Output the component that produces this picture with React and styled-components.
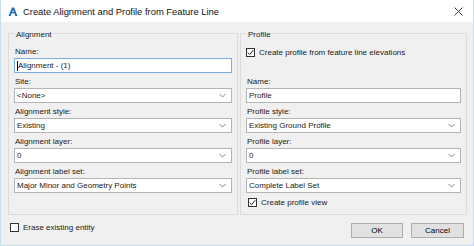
import React from "react";
import styled, { createGlobalStyle } from "styled-components";

const GlobalStyle = createGlobalStyle`
  html, body {
    margin: 0;
    padding: 0;
    background: #ffffff;
  }
  body {
    font-family: "Liberation Sans", Arial, sans-serif;
    color: #1a1a1a;
  }
`;

const Window = styled.div`
  width: 474px;
  height: 246px;
  box-sizing: border-box;
  display: flex;
  flex-direction: column;
  border: 1px solid #c2e0f2;
  border-top: none;
  background: #f0f0f0;
  overflow: hidden;
`;

const TitleBar = styled.div`
  height: 22px;
  flex: none;
  background: #ffffff;
  display: flex;
  align-items: center;
  padding: 0 10px 0 7px;
`;

const Title = styled.span`
  font-size: 9.4px;
  margin-left: 5px;
  flex: 1;
  color: #111;
`;

const Body = styled.div`
  flex: 1;
  display: flex;
  flex-direction: column;
  padding: 4px 7px 0 7px;
`;

const Columns = styled.div`
  display: grid;
  grid-template-columns: 230px 227px;
  gap: 2px;
`;

const Group = styled.fieldset`
  margin: 0;
  height: 189px;
  box-sizing: border-box;
  border: 1px solid #dcdcdc;
  padding: 0 5px;
  min-width: 0;
`;

const Legend = styled.legend`
  font-size: 8px;
  padding: 4px 1px 0 1px;
  margin-left: 1px;
  line-height: 10px;
`;

const Label = styled.div`
  font-size: 8px;
  line-height: 12px;
  height: 12px;
  padding-left: 1px;
  margin-top: ${(p) => p.$top || 0}px;
`;

const Field = styled.div`
  height: 15px;
  box-sizing: border-box;
  background: #ffffff;
  border: 1px solid ${(p) => (p.$focused ? "#7aaee0" : "#b4b4b4")};
  display: flex;
  align-items: center;
  padding: 0 5px 0 2px;
  font-size: 8px;
  margin-bottom: 3px;
`;

const FieldText = styled.span`
  flex: 1;
  white-space: nowrap;
  overflow: hidden;
`;

const Caret = styled.span`
  display: inline-block;
  width: 1px;
  height: 10px;
  background: #000;
`;

const CheckRow = styled.label`
  display: flex;
  align-items: center;
  gap: 4px;
  font-size: 8px;
  height: 12px;
  margin-top: ${(p) => p.$top || 0}px;
  margin-bottom: ${(p) => p.$bottom || 0}px;
  padding-left: ${(p) => p.$left || 0}px;
`;

const Box = styled.span`
  width: 9px;
  height: 9px;
  box-sizing: border-box;
  border: 1px solid #333;
  background: #fff;
  display: flex;
  align-items: center;
  justify-content: center;
`;

const Footer = styled.div`
  display: flex;
  align-items: flex-start;
  justify-content: space-between;
  padding-left: 2px;
`;

const Buttons = styled.div`
  display: flex;
  gap: 8px;
  margin-top: 8px;
  padding-right: 2px;
`;

const Button = styled.button`
  width: ${(p) => p.$w || 53}px;
  height: 15px;
  box-sizing: border-box;
  background: #e1e1e1;
  border: 1px solid #adadad;
  font-family: "Liberation Sans", Arial, sans-serif;
  font-size: 8px;
  color: #000;
  padding: 0;
`;

const Chevron = () => (
  <svg width="7" height="5" viewBox="0 0 7 5">
    <path d="M0.5 1 L3.5 4 L6.5 1" fill="none" stroke="#7a7a7a" strokeWidth="0.9" />
  </svg>
);

const Check = ({ checked }) => (
  <Box>
    {checked && (
      <svg width="7" height="7" viewBox="0 0 7 7">
        <path d="M0.8 3.6 L2.7 5.5 L6.3 1.2" fill="none" stroke="#222" strokeWidth="1" />
      </svg>
    )}
  </Box>
);

const Select = ({ value }) => (
  <Field>
    <FieldText>{value}</FieldText>
    <Chevron />
  </Field>
);

const AppIcon = () => (
  <svg width="10" height="9" viewBox="0 0 10 9">
    <path d="M0.5 9 L4 0.5 L6 0.5 L9.5 9 L7.4 9 L5 3 L2.6 9 Z" fill="#1f6fb8" />
    <path d="M3.3 6.2 L6.7 6.2 L6.2 5 L3.8 5 Z" fill="#1f6fb8" />
  </svg>
);

const CloseIcon = () => (
  <svg width="9" height="9" viewBox="0 0 9 9">
    <path d="M0.5 0.5 L8.5 8.5 M8.5 0.5 L0.5 8.5" stroke="#222" strokeWidth="0.9" />
  </svg>
);

export default function App() {
  return (
    <>
      <GlobalStyle />
      <Window>
        <TitleBar>
          <AppIcon />
          <Title>Create Alignment and Profile from Feature Line</Title>
          <CloseIcon />
        </TitleBar>
        <Body>
          <Columns>
            <Group>
              <Legend>Alignment</Legend>
              <Label $top={6}>Name:</Label>
              <Field $focused>
                <Caret />
                <FieldText>Alignment - (1)</FieldText>
              </Field>
              <Label>Site:</Label>
              <Select value="<None>" />
              <Label>Alignment style:</Label>
              <Select value="Existing" />
              <Label>Alignment layer:</Label>
              <Select value="0" />
              <Label>Alignment label set:</Label>
              <Select value="Major Minor and Geometry Points" />
            </Group>
            <Group>
              <Legend>Profile</Legend>
              <CheckRow $top={6} $bottom={18}>
                <Check checked />
                Create profile from feature line elevations
              </CheckRow>
              <Label>Name:</Label>
              <Field>
                <FieldText>Profile</FieldText>
              </Field>
              <Label>Profile style:</Label>
              <Select value="Existing Ground Profile" />
              <Label>Profile layer:</Label>
              <Select value="0" />
              <Label>Profile label set:</Label>
              <Select value="Complete Label Set" />
              <CheckRow $top={1} $left={2}>
                <Check checked />
                Create profile view
              </CheckRow>
            </Group>
          </Columns>
          <Footer>
            <CheckRow $top={6}>
              <Check />
              Erase existing entity
            </CheckRow>
            <Buttons>
              <Button $w={52}>OK</Button>
              <Button $w={53}>Cancel</Button>
            </Buttons>
          </Footer>
        </Body>
      </Window>
    </>
  );
}
